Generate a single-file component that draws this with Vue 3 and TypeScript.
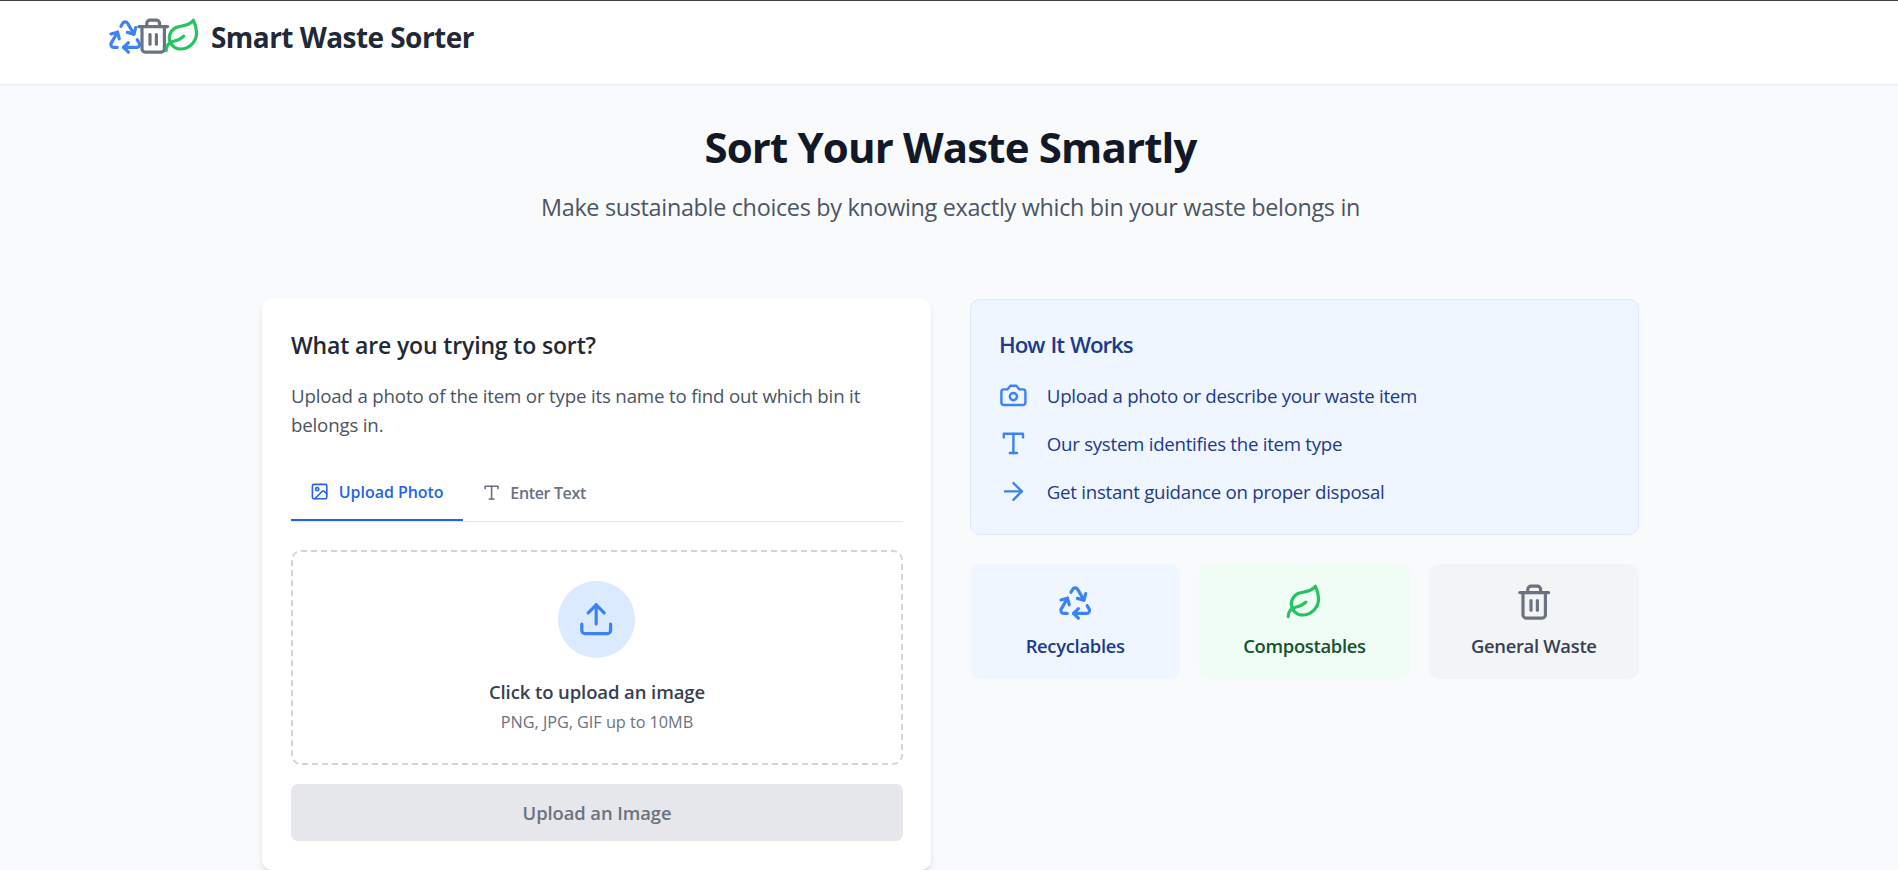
<script setup lang="ts">
interface Shape { paths: string[]; circle?: [number, number, number]; rect?: boolean }

const icons: Record<string, Shape> = {
  recycle: {
    paths: [
      'M7 19H4.815a1.83 1.83 0 0 1-1.57-.881 1.785 1.785 0 0 1-.004-1.784L7.196 9.5',
      'M11 19h8.203a1.83 1.83 0 0 0 1.556-.89 1.784 1.784 0 0 0 0-1.775l-1.226-2.12',
      'm14 16-3 3 3 3',
      'M8.293 13.596 7.196 9.5 3.1 10.598',
      'm9.344 5.811 1.093-1.892A1.83 1.83 0 0 1 11.985 3a1.784 1.784 0 0 1 1.546.888l3.943 6.843',
      'm13.378 9.633 4.096 1.098 1.097-4.096',
    ],
  },
  trash: {
    paths: ['M3 6h18', 'M19 6v14c0 1-1 2-2 2H7c-1 0-2-1-2-2V6', 'M8 6V4c0-1 1-2 2-2h4c1 0 2 1 2 2v2', 'M10 11v6', 'M14 11v6'],
  },
  leaf: {
    paths: ['M11 20A7 7 0 0 1 9.8 6.1C15.5 5 17 4.48 19 2c1 2 2 4.18 2 8 0 5.5-4.78 10-10 10Z', 'M2 21c0-3 1.85-5.36 5.08-6C9.5 14.52 12 13 13 12'],
  },
  image: { paths: ['m21 15-3.086-3.086a2 2 0 0 0-2.828 0L6 21'], circle: [9, 9, 2], rect: true },
  type: { paths: ['M4 7V4h16v3', 'M9 20h6', 'M12 4v16'] },
  upload: { paths: ['M21 15v4a2 2 0 0 1-2 2H5a2 2 0 0 1-2-2v-4', 'm17 8-5-5-5 5', 'M12 3v12'] },
  camera: {
    paths: ['M14.5 4h-5L7 7H4a2 2 0 0 0-2 2v9a2 2 0 0 0 2 2h16a2 2 0 0 0 2-2V9a2 2 0 0 0-2-2h-3l-2.5-3z'],
    circle: [12, 13, 3],
  },
  arrow: { paths: ['M5 12h14', 'm12 5 7 7-7 7'] },
}

const logo = [
  { icon: 'recycle', tone: 'blue' },
  { icon: 'trash', tone: 'gray' },
  { icon: 'leaf', tone: 'green' },
]
const tabs = [
  { icon: 'image', label: 'Upload Photo', active: true },
  { icon: 'type', label: 'Enter Text', active: false },
]
const steps = [
  { icon: 'camera', text: 'Upload a photo or describe your waste item' },
  { icon: 'type', text: 'Our system identifies the item type' },
  { icon: 'arrow', text: 'Get instant guidance on proper disposal' },
]
const bins = [
  { icon: 'recycle', label: 'Recyclables', tone: 'blue' },
  { icon: 'leaf', label: 'Compostables', tone: 'green' },
  { icon: 'trash', label: 'General Waste', tone: 'gray' },
]
</script>

<template>
  <div class="page">
    <header class="header">
      <div class="logo">
        <svg v-for="l in logo" :key="l.icon" class="icon icon-lg" :class="l.tone" viewBox="0 0 24 24">
          <path v-for="d in icons[l.icon].paths" :key="d" :d="d" />
        </svg>
      </div>
      <span class="brand">Smart Waste Sorter</span>
    </header>

    <main class="main">
      <section class="hero">
        <h1 class="title">Sort Your Waste Smartly</h1>
        <p class="subtitle">Make sustainable choices by knowing exactly which bin your waste belongs in</p>
      </section>

      <div class="columns">
        <section class="card">
          <h2 class="card-title">What are you trying to sort?</h2>
          <p class="card-text">Upload a photo of the item or type its name to find out which bin it <br />belongs in.</p>
          <div class="tabs">
            <button v-for="t in tabs" :key="t.label" class="tab" :class="{ active: t.active }">
              <svg class="icon icon-sm" viewBox="0 0 24 24">
                <rect v-if="icons[t.icon].rect" x="3" y="3" width="18" height="18" rx="2" />
                <circle v-if="icons[t.icon].circle" :cx="icons[t.icon].circle![0]" :cy="icons[t.icon].circle![1]" :r="icons[t.icon].circle![2]" />
                <path v-for="d in icons[t.icon].paths" :key="d" :d="d" />
              </svg>
              <span>{{ t.label }}</span>
            </button>
          </div>
          <div class="drop">
            <div class="circle">
              <svg class="icon icon-lg" viewBox="0 0 24 24">
                <path v-for="d in icons.upload.paths" :key="d" :d="d" />
              </svg>
            </div>
            <p class="drop-title">Click to upload an image</p>
            <p class="drop-hint">PNG, JPG, GIF up to 10MB</p>
          </div>
          <button class="submit" disabled>Upload an Image</button>
        </section>

        <aside class="side">
          <section class="how">
            <h2 class="how-title">How It Works</h2>
            <ul class="steps">
              <li v-for="s in steps" :key="s.text" class="step">
                <svg class="icon icon-md" viewBox="0 0 24 24">
                  <path v-for="d in icons[s.icon].paths" :key="d" :d="d" />
                  <circle v-if="icons[s.icon].circle" :cx="icons[s.icon].circle![0]" :cy="icons[s.icon].circle![1]" :r="icons[s.icon].circle![2]" />
                </svg>
                <span>{{ s.text }}</span>
              </li>
            </ul>
          </section>
          <div class="bins">
            <div v-for="b in bins" :key="b.label" class="bin" :class="'bin-' + b.tone">
              <svg class="icon icon-lg" :class="b.tone" viewBox="0 0 24 24">
                <path v-for="d in icons[b.icon].paths" :key="d" :d="d" />
              </svg>
              <span class="bin-label">{{ b.label }}</span>
            </div>
          </div>
        </aside>
      </div>
    </main>
  </div>
</template>

<style>
html, body { background: #f9fafb; overflow: hidden; }
</style>

<style scoped>
* { box-sizing: border-box; margin: 0; padding: 0; }
.page { height: 870px; overflow: hidden; background: #f9fafb; font-family: "Open Sans", "Noto Sans", sans-serif; color: #1f2937; white-space: nowrap; }
.header { height: 85px; padding: 17px 0 0 105.5px; display: flex; align-items: flex-start; background: #fff; border-top: 1px solid #3c4043; border-bottom: 1px solid #eceef1; }
.logo { display: flex; margin-top: -1px; }
.logo .icon + .icon { margin-left: -9.6px; }
.brand { margin-left: 9.5px; font-size: 28px; line-height: 38px; font-weight: 700; letter-spacing: -0.55px; }
.icon { display: block; flex: none; fill: none; stroke: currentColor; stroke-width: 2; stroke-linecap: round; stroke-linejoin: round; }
.icon-lg { width: 38.4px; height: 38.4px; }
.icon-md { width: 28.8px; height: 28.8px; }
.icon-sm { width: 19.2px; height: 19.2px; }
.blue { color: #3b82f6; }
.green { color: #22c55e; }
.gray { color: #6b7280; }
.main { width: 1377px; margin-left: 262px; }
.hero { height: 214px; padding-top: 38px; text-align: center; }
.title { font-size: 42px; line-height: 48px; font-weight: 700; letter-spacing: -0.85px; color: #111827; }
.subtitle { margin-top: 19px; font-size: 23.4px; line-height: 34px; letter-spacing: -0.32px; color: #4b5563; }
.columns { display: grid; grid-template-columns: 669px 669px; gap: 39px; align-items: start; }
.card { height: 571px; padding: 29px 28px 29px 29px; background: #fff; border-radius: 10px; box-shadow: 0 5px 7px -1px rgba(0,0,0,.1), 0 2px 5px -2px rgba(0,0,0,.1); }
.card-title { font-size: 23px; line-height: 34px; font-weight: 600; letter-spacing: -0.15px; }
.card-text { margin-top: 19px; font-size: 18.7px; line-height: 29px; letter-spacing: -0.18px; color: #4b5563; }
.tabs { display: flex; margin-top: 25px; border-bottom: 1px solid #e5e7eb; height: 58px; }
.tab { display: flex; align-items: center; height: 57px; padding: 0 19px; border: 0; background: none; font: 600 16px/24px "Open Sans", sans-serif; letter-spacing: -0.35px; color: #6b7280; }
.tab span { margin-left: 9.6px; }
.tab.active { letter-spacing: -0.05px; color: #2563eb; border-bottom: 2px solid #2563eb; }
.drop { display: flex; flex-direction: column; align-items: center; height: 215px; margin-top: 28px; padding-top: 29px; border: 2px dashed #d1d5db; border-radius: 10px; }
.circle { display: flex; align-items: center; justify-content: center; width: 77px; height: 77px; margin-right: 1px; border-radius: 50%; background: #dbeafe; color: #3b82f6; }
.drop-title { margin-top: 19px; font-size: 18.5px; line-height: 29px; font-weight: 600; letter-spacing: -0.1px; color: #374151; }
.drop-hint { margin-top: 4px; font-size: 16.3px; line-height: 24px; letter-spacing: -0.05px; color: #6b7280; }
.submit { display: block; width: 100%; height: 57px; margin-top: 19px; border: 0; border-radius: 7px; background: #e5e7eb; font: 600 18.4px/29px "Open Sans", sans-serif; letter-spacing: -0.08px; color: #6b7280; }
.how { height: 236px; padding: 28px 28px 0; background: #eff6ff; border: 1px solid #dbeafe; border-radius: 10px; }
.how-title { font-size: 22.3px; line-height: 34px; font-weight: 600; letter-spacing: -1.1px; word-spacing: 1.5px; color: #1e3a8a; }
.steps { display: grid; gap: 19px; margin-top: 19px; list-style: none; }
.step { display: flex; height: 29px; font-size: 18.7px; line-height: 29px; letter-spacing: -0.28px; color: #1e3a8a; }
.step .icon { color: #3b82f6; }
.step span { margin-left: 19px; }
.bins { display: grid; grid-template-columns: repeat(3, 1fr); gap: 19px; margin-top: 29px; }
.bin { display: flex; flex-direction: column; align-items: center; height: 115px; padding-top: 19px; border-radius: 10px; }
.bin-label { margin-top: 10px; font-size: 18.4px; line-height: 29px; font-weight: 600; letter-spacing: -0.3px; }
.bin-blue { background: #eff6ff; }
.bin-blue .bin-label { color: #1e3a8a; }
.bin-green { background: #f0fdf4; }
.bin-green .bin-label { color: #14532d; }
.bin-gray { background: #f3f4f6; }
.bin-gray .bin-label { color: #374151; }
</style>
